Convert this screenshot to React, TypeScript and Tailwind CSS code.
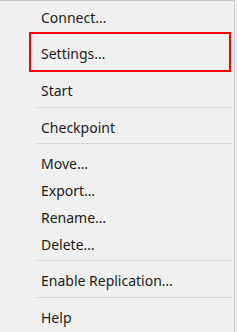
const font = { fontFamily: '"Noto Sans", "Liberation Sans", sans-serif' };

function Item({ label, className = "h-[27px]" }: { label: string; className?: string }) {
  return (
    <div className={`flex items-center pl-[41px] text-[14px] text-[#1b1b1b] ${className}`}>
      <span className="leading-none">{label}</span>
    </div>
  );
}

function Separator() {
  return (
    <div className="pt-[2px] pb-[6px] pl-[36px] pr-[2px]">
      <div className="h-px bg-[#d9d9d9]" />
    </div>
  );
}

export default function App() {
  return (
    <div className="h-[332px] w-[237px] overflow-hidden bg-[#f0f0f0]" style={font}>
      <div className="flex h-full w-[235px] flex-col border-t border-r border-[#cccccc]">
        <Item label="Connect…" className="h-[31px] pt-[3px]" />
        <div className="ml-[29px] flex h-[40px] w-[202px] items-center border-2 border-[#ff0000] pt-[3px] pl-[10px] text-[14px] text-[#1b1b1b]">
          <span className="leading-none">Settings…</span>
        </div>
        <Item label="Start" className="h-[33px] pt-[5px]" />
        <Separator />
        <Item label="Checkpoint" />
        <Separator />
        <Item label="Move…" />
        <Item label="Export…" />
        <Item label="Rename…" />
        <Item label="Delete…" />
        <Separator />
        <Item label="Enable Replication…" className="h-[28px]" />
        <Separator />
        <Item label="Help" className="h-[28px]" />
      </div>
    </div>
  );
}
